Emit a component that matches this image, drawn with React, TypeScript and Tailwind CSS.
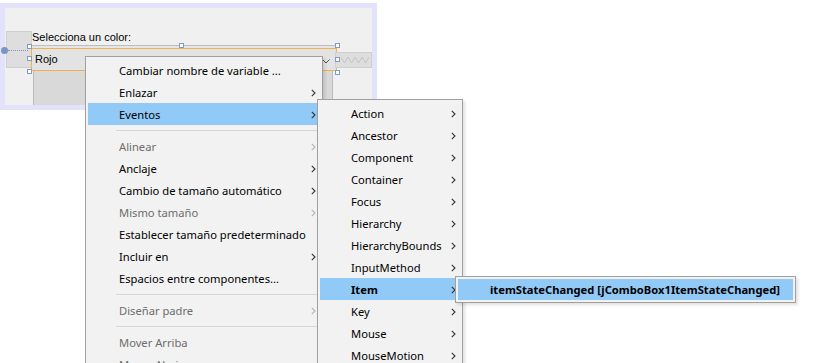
import React from 'react';

type Item =
  | { label: string; arrow?: boolean; disabled?: boolean; active?: boolean; bold?: boolean }
  | 'sep';

const mainItems: Item[] = [
  { label: 'Cambiar nombre de variable ...' },
  { label: 'Enlazar', arrow: true },
  { label: 'Eventos', arrow: true, active: true },
  'sep',
  { label: 'Alinear', arrow: true, disabled: true },
  { label: 'Anclaje', arrow: true },
  { label: 'Cambio de tamaño automático', arrow: true },
  { label: 'Mismo tamaño', arrow: true, disabled: true },
  { label: 'Establecer tamaño predeterminado' },
  { label: 'Incluir en', arrow: true },
  { label: 'Espacios entre componentes...' },
  'sep',
  { label: 'Diseñar padre', arrow: true, disabled: true },
  'sep',
  { label: 'Mover Arriba', disabled: true },
  { label: 'Mover Abajo', disabled: true },
];

const eventItems: Item[] = [
  'Action',
  'Ancestor',
  'Component',
  'Container',
  'Focus',
  'Hierarchy',
  'HierarchyBounds',
  'InputMethod',
  'Item',
  'Key',
  'Mouse',
  'MouseMotion',
  'MouseWheel',
  'PropertyChange',
].map((label) =>
  label === 'Item' ? { label, arrow: true, active: true, bold: true } : { label, arrow: true },
);

function Chevron({ disabled }: { disabled?: boolean }) {
  return (
    <svg width="5" height="8" viewBox="0 0 5 8" className="shrink-0">
      <path
        d="M0.8 0.8 L4 4 L0.8 7.2"
        fill="none"
        stroke={disabled ? '#b4b4b4' : '#333333'}
        strokeWidth="1.1"
      />
    </svg>
  );
}

function Menu({ items, className }: { items: Item[]; className: string }) {
  return (
    <div
      className={`absolute border border-[#a0a0a0] bg-[#f2f2f2] px-[2px] pt-[2px] shadow-[2px_2px_3px_rgba(0,0,0,0.12)] ${className}`}
    >
      {items.map((it, i) =>
        it === 'sep' ? (
          <div key={i} className="flex h-[10px] items-center pl-[28px]">
            <div className="h-px flex-1 bg-[#d7d7d7]" />
          </div>
        ) : (
          <div
            key={i}
            className={`flex h-[22px] items-center pl-[31px] pr-[4px] pt-[2px] ${it.active ? 'bg-[#91c9f7]' : ''}`}
          >
            <span
              className={`flex-1 whitespace-nowrap ${it.disabled ? 'text-[#6d6d6d]' : 'text-black'} ${it.bold ? 'font-bold' : ''}`}
            >
              {it.label}
            </span>
            {it.arrow && <Chevron disabled={it.disabled} />}
          </div>
        ),
      )}
    </div>
  );
}

function Handle({ x, y }: { x: number; y: number }) {
  return (
    <div
      className="absolute h-[5px] w-[5px] border border-[#7f9cc4] bg-white"
      style={{ left: x, top: y }}
    />
  );
}

function Designer() {
  return (
    <div className="absolute left-0 top-[3px] h-[107px] w-[377px] bg-[#e2e2fa] p-[5px]">
      <div className="relative h-full w-full bg-[#f0f0f0] font-['Liberation_Sans',sans-serif] text-[11px] text-black">
        {/* left gap block */}
        <div className="absolute left-[1px] top-[23px] h-[37px] w-[26px] border border-[#d0d0d0] bg-[#dedede]" />
        {/* anchor line */}
        <div className="absolute left-[-4px] top-[39px] h-[7px] w-[7px] rounded-full bg-[#7a95c2]" />
        <div className="absolute left-[3px] top-[42px] w-[20px] border-t border-dotted border-[#7a95c2]" />

        <div className="absolute left-[27px] top-[23px] leading-[13px]">Selecciona un color:</div>

        {/* component bounds */}
        <div className="absolute left-[27px] top-[37px] h-[5px] w-[305px] border-t border-[#bdbdbd] bg-[#e6e6e6]" />
        {/* dropdown area below combo */}
        <div className="absolute left-[28px] top-[63px] h-[34px] w-[300px] border-x border-[#bcbcbc] bg-[#d9d9d9]" />
        {/* combo box */}
        <div className="absolute left-[26px] top-[40px] flex h-[23px] w-[306px] items-center border border-[#eeb24e] bg-[#e3e3e3] pl-[3px]">
          <span>Rojo</span>
          <svg width="8" height="5" viewBox="0 0 8 5" className="absolute right-[6px] top-[10px]">
            <path d="M0.5 0.5 L4 4 L7.5 0.5" fill="none" stroke="#555" strokeWidth="1" />
          </svg>
        </div>
        {/* spring gap */}
        <div className="absolute left-[330px] top-[44px] flex h-[16px] w-[37px] items-center justify-end border border-[#d0d0d0] bg-[#dedede] pr-[2px]">
          <svg width="28" height="8" viewBox="0 0 28 8">
            <path
              d="M0 1 L3.5 7 L7 1 L10.5 7 L14 1 L17.5 7 L21 1 L24.5 7 L28 1"
              fill="none"
              stroke="#c4c4c4"
              strokeWidth="1"
            />
          </svg>
        </div>

        <Handle x={22} y={36} />
        <Handle x={174} y={35} />
        <Handle x={330} y={35} />
        <Handle x={22} y={48} />
        <Handle x={330} y={49} />
        <Handle x={22} y={61} />
        <Handle x={330} y={62} />
      </div>
    </div>
  );
}

export default function App() {
  return (
    <div className="relative h-[363px] w-[823px] overflow-hidden bg-white font-['Noto_Sans',sans-serif] text-[11.2px]">
      <Designer />
      <Menu items={mainItems} className="left-[85px] top-[56px] w-[238px]" />
      <Menu items={eventItems} className="left-[317px] top-[99px] w-[146px]" />
      <div className="absolute left-[455px] top-[276px] w-[341px] border border-[#a0a0a0] bg-[#f2f2f2] p-[2px] shadow-[2px_2px_3px_rgba(0,0,0,0.12)]">
        <div className="flex h-[21px] items-center bg-[#91c9f7] pl-[32px] pt-[2px]">
          <span className="whitespace-nowrap font-bold text-black">
            itemStateChanged [jComboBox1ItemStateChanged]
          </span>
        </div>
      </div>
    </div>
  );
}
